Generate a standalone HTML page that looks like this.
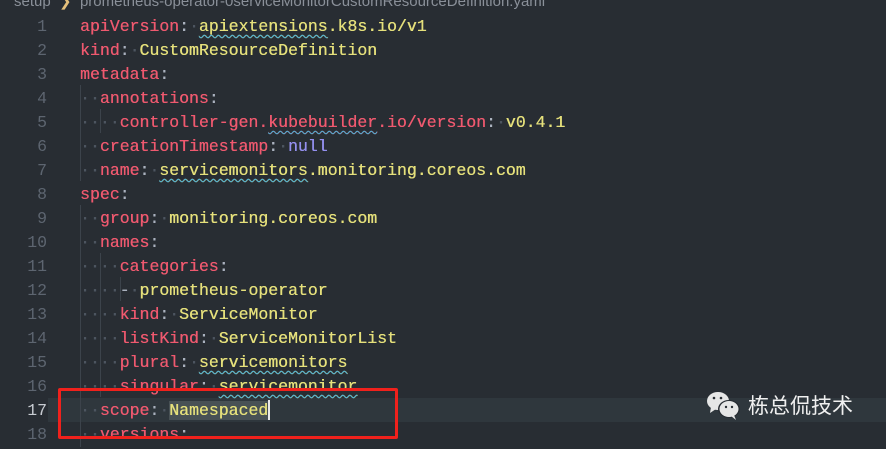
<!DOCTYPE html>
<html><head><meta charset="utf-8"><style>
body{margin:0;width:886px;height:447px;overflow:hidden;background:#282d33;font-family:"Liberation Mono",monospace;font-size:16.5px;}
.bc{position:absolute;left:14px;top:-8px;color:#8a9099;font-family:"Liberation Sans",sans-serif;font-size:15px;white-space:pre}
.t{position:absolute;left:0;top:2px;width:886px;height:447px}
.ln{position:absolute;left:0;width:47px;text-align:right;color:#5d6570;height:24px;line-height:24px}
.cd{position:absolute;left:80px;height:24px;line-height:24px;white-space:pre;color:#abb2bf;text-shadow:0.3px 0 0 currentColor}
.k{color:#ef596f}.v{color:#e5e07b}.n{color:#9490f0}.d{color:#4d5560}.p{color:#abb2bf}
.w{text-decoration:underline wavy #4ab0d8;text-decoration-thickness:1px;text-underline-offset:3px}
.cur{position:absolute;left:48px;width:838px;top:398px;height:24px;background:#2f373d}
.g{position:absolute;width:1px;background:#3c434b}
</style></head><body>
<div class="bc">setup  <span style="color:#e5c07b">❯</span>  prometheus-operator-0serviceMonitorCustomResourceDefinition.yaml</div>
<div class="cur"></div>
<div class="g" style="left:80px;top:85px;height:96px"></div>
<div class="g" style="left:80px;top:205px;height:242px"></div>
<div class="g" style="left:100px;top:109px;height:24px"></div>
<div class="g" style="left:100px;top:253px;height:144px"></div>
<div class="g" style="left:120px;top:277px;height:24px"></div>
<div style="position:absolute;left:268px;top:400px;width:2px;height:20px;background:#e8e8e8"></div>
<div class="t">
<div class="ln" style="top:13px">1</div><div class="cd" style="top:13px"><span class="k">apiVersion</span><span class="p">:</span><span class="d">·</span><span class="v"><span class="w">apiextensions</span>.k8s.io/v1</span></div>
<div class="ln" style="top:37px">2</div><div class="cd" style="top:37px"><span class="k">kind</span><span class="p">:</span><span class="d">·</span><span class="v">CustomResourceDefinition</span></div>
<div class="ln" style="top:61px">3</div><div class="cd" style="top:61px"><span class="k">metadata</span><span class="p">:</span></div>
<div class="ln" style="top:85px">4</div><div class="cd" style="top:85px"><span class="d">··</span><span class="k">annotations</span><span class="p">:</span></div>
<div class="ln" style="top:109px">5</div><div class="cd" style="top:109px"><span class="d">····</span><span class="k">controller-gen.<span class="w">kubebuilder</span>.io/version</span><span class="p">:</span><span class="d">·</span><span class="v">v0.4.1</span></div>
<div class="ln" style="top:133px">6</div><div class="cd" style="top:133px"><span class="d">··</span><span class="k">creationTimestamp</span><span class="p">:</span><span class="d">·</span><span class="n">null</span></div>
<div class="ln" style="top:157px">7</div><div class="cd" style="top:157px"><span class="d">··</span><span class="k">name</span><span class="p">:</span><span class="d">·</span><span class="v"><span class="w">servicemonitors</span>.monitoring.coreos.com</span></div>
<div class="ln" style="top:181px">8</div><div class="cd" style="top:181px"><span class="k">spec</span><span class="p">:</span></div>
<div class="ln" style="top:205px">9</div><div class="cd" style="top:205px"><span class="d">··</span><span class="k">group</span><span class="p">:</span><span class="d">·</span><span class="v">monitoring.coreos.com</span></div>
<div class="ln" style="top:229px">10</div><div class="cd" style="top:229px"><span class="d">··</span><span class="k">names</span><span class="p">:</span></div>
<div class="ln" style="top:253px">11</div><div class="cd" style="top:253px"><span class="d">····</span><span class="k">categories</span><span class="p">:</span></div>
<div class="ln" style="top:277px">12</div><div class="cd" style="top:277px"><span class="d">····</span><span class="p">-</span><span class="d">·</span><span class="v">prometheus-operator</span></div>
<div class="ln" style="top:301px">13</div><div class="cd" style="top:301px"><span class="d">····</span><span class="k">kind</span><span class="p">:</span><span class="d">·</span><span class="v">ServiceMonitor</span></div>
<div class="ln" style="top:325px">14</div><div class="cd" style="top:325px"><span class="d">····</span><span class="k">listKind</span><span class="p">:</span><span class="d">·</span><span class="v">ServiceMonitorList</span></div>
<div class="ln" style="top:349px">15</div><div class="cd" style="top:349px"><span class="d">····</span><span class="k">plural</span><span class="p">:</span><span class="d">·</span><span class="v"><span class="w">servicemonitors</span></span></div>
<div class="ln" style="top:373px">16</div><div class="cd" style="top:373px"><span class="d">····</span><span class="k">singular</span><span class="p">:</span><span class="d">·</span><span class="v"><span class="w">servicemonitor</span></span></div>
<div class="ln" style="top:397px;color:#c8ccd2">17</div><div class="cd" style="top:397px"><span class="d">··</span><span class="k">scope</span><span class="p">:</span><span class="d">·</span><span class="v" style="background:#485155">Namespaced</span></div>
<div class="ln" style="top:421px">18</div><div class="cd" style="top:421px"><span class="d">··</span><span class="k">versions</span><span class="p">:</span></div>
</div>
<div style="position:absolute;left:58px;top:388px;width:334px;height:45px;border:3px solid #f0211c;border-radius:2px"></div>

<svg style="position:absolute;left:705px;top:390px" width="38" height="32" viewBox="0 0 38 32">
<ellipse cx="13" cy="11" rx="11" ry="9" fill="#e6e6e6"/><path d="M6 17 L5 23 L11 19Z" fill="#e6e6e6"/>
<ellipse cx="24" cy="19" rx="11" ry="9" fill="#282d33"/>
<ellipse cx="24" cy="19" rx="9.5" ry="8" fill="#e6e6e6"/><path d="M29 25 L31 30 L26 26Z" fill="#e6e6e6"/>
<circle cx="9" cy="8" r="1.3" fill="#282d33"/><circle cx="16" cy="8" r="1.3" fill="#282d33"/>
<circle cx="21" cy="17" r="1.2" fill="#282d33"/><circle cx="27" cy="17" r="1.2" fill="#282d33"/>
</svg>
<div style="position:absolute;left:748px;top:393px;color:#f0f0f0;font-family:'Liberation Sans','Noto Sans CJK SC',sans-serif;font-size:21px;line-height:28px">栋总侃技术</div>
</body></html>
